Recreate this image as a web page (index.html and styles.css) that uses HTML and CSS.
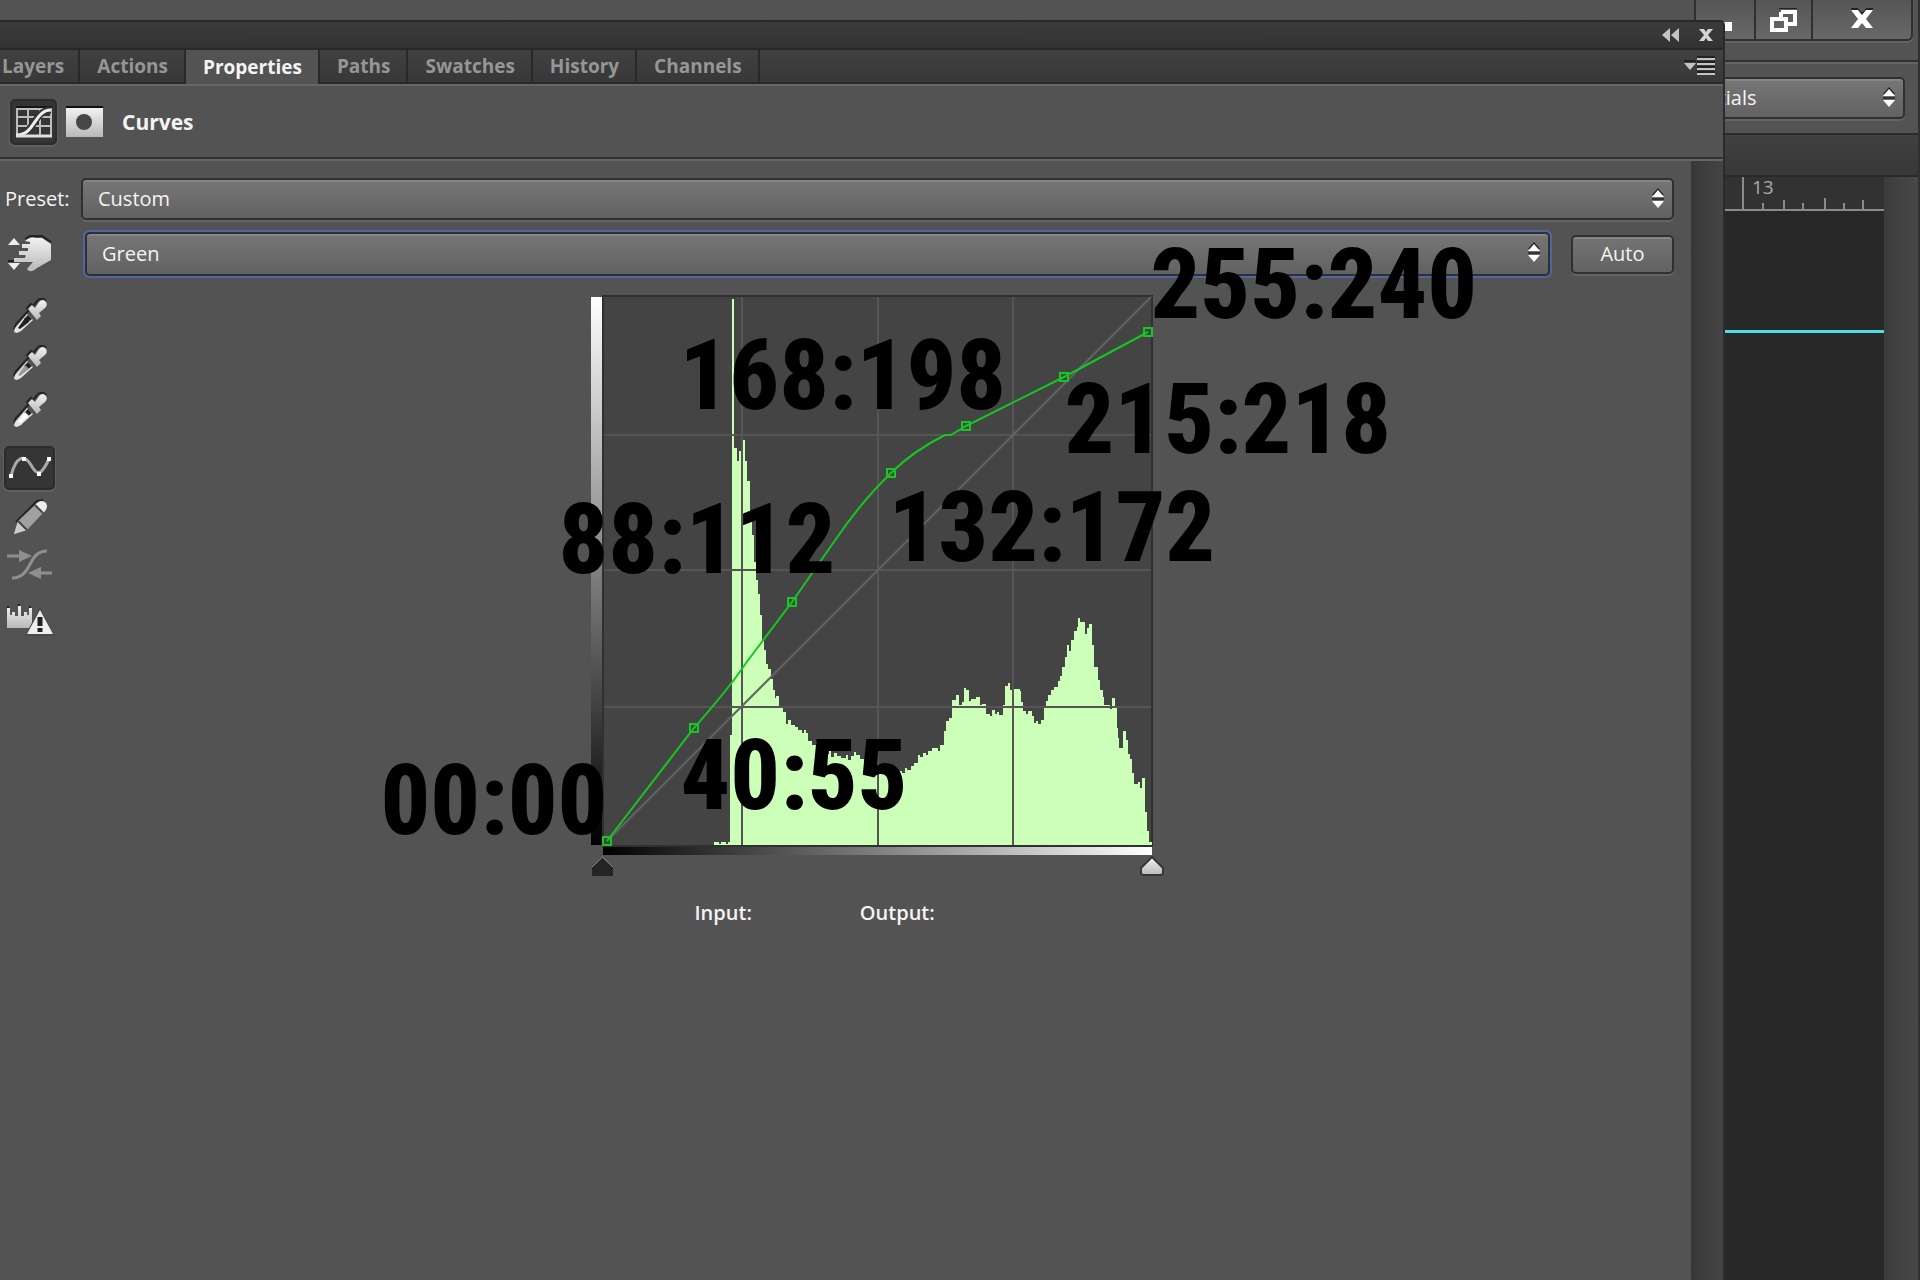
FILE: index.html
```
<!DOCTYPE html>
<html lang="en">
<head>
  <meta charset="UTF-8">
  <meta name="viewport" content="width=device-width, initial-scale=1.0">
  <title>Curves</title>
  <link rel="stylesheet" href="styles.css">
</head>
<body>
  <svg class="defs" aria-hidden="true">
    <defs>
      <linearGradient id="metal" x1="0" y1="0" x2="0" y2="1">
        <stop offset="0" stop-color="#f2f2f2"/>
        <stop offset="1" stop-color="#b8b8b8"/>
      </linearGradient>
      <symbol id="updown" viewBox="0 0 12 22">
        <path d="M0 7L6 0L12 7Z" fill="#222"/>
        <path d="M0 9L6 2L12 9Z" fill="#fff"/>
        <path d="M0 10H12V12H0Z" fill="#333"/>
        <path d="M0 13H12L6 20Z" fill="#fff"/>
      </symbol>
      <symbol id="dropper" viewBox="0 0 36 36">
        <path d="M1 31L3 26L16 12L14 10L18 6L20 8L25 2Q30 -1 33 3" fill="none" stroke="#252525" stroke-width="2"/>
        <path d="M14 16L20 22L8 33L4 35L1 34L2 30Z" fill="#e4e4e4"/>
        <path d="M15 17L19 21L14 25L11 21Z" fill="#222"/>
        <path class="ink" d="M12 20L16 24L7 31L5 30Z"/>
        <path d="M15 11L19 7L22 10L26 4Q30 0 33 4Q35 7 32 10L26 15L28 18L24 22Z" fill="url(#metal)"/>
      </symbol>
    </defs>
  </svg>

  <div class="app">
    <div class="titlebar">
      <button class="win min" aria-label="Minimize"><svg width="14" height="10"><path d="M0 1H14V10H0Z" fill="#fff"/></svg></button>
      <button class="win restore" aria-label="Restore">
        <svg width="28" height="26"><path d="M9 0H27" stroke="#222" stroke-width="2"/><path d="M11 4H25V16H18M11 4V10" fill="none" stroke="#fff" stroke-width="4"/><path d="M2 11H16V22H2Z" fill="none" stroke="#fff" stroke-width="4"/></svg>
      </button>
      <button class="win close" aria-label="Close">
        <svg width="24" height="22"><path d="M1 1L7 1L12 6L17 1H23" fill="none" stroke="#222" stroke-width="2"/><path d="M1 2H8L12 7L16 2H23L16 11L23 20H16L12 15L8 20H1L8 11Z" fill="#fff"/></svg>
      </button>
    </div>
    <div class="options">
      <div class="select workspace">
        <select aria-label="Workspace"><option>Essentials</option></select>
        <svg class="arrows"><use href="#updown"/></svg>
      </div>
    </div>
    <div class="doc-tabs"></div>
    <div class="document">
      <div class="canvas">
        <div class="ruler">
          <svg width="160" height="34"><path d="M19 0V33" stroke="#8a8a8a" stroke-width="2"/><path d="M39 26V33M60 23V33M79 26V33M101 21V33M120 26V33M139 23V33" stroke="#8a8a8a" stroke-width="2"/></svg>
          <span>13</span>
        </div>
        <div class="guide"></div>
      </div>
      <div class="doc-scroll"></div>
    </div>
  </div>

  <div class="panel">
    <div class="panel-bar">
      <button aria-label="Collapse panel"><svg width="17" height="14"><path d="M0 7L8 0V14ZM9 7L17 0V14Z" fill="#c4c4c4"/></svg></button>
      <button aria-label="Close panel"><svg width="14" height="14"><path d="M0 1H5L7 4L9 1H14L9 7L14 13H9L7 10L5 13H0L5 7Z" fill="#d4d4d4"/></svg></button>
    </div>
    <div class="tabs">
      <button>Layers</button>
      <button>Actions</button>
      <button class="active">Properties</button>
      <button>Paths</button>
      <button>Swatches</button>
      <button>History</button>
      <button>Channels</button>
      <button class="menu" aria-label="Panel menu">
        <svg width="31" height="20"><path d="M0 5H12" stroke="#222" stroke-width="2"/><path d="M0 7H12L6 14Z" fill="#c4c4c4"/><path d="M13 1H31M13 6H31M13 11H31M13 16H31" stroke="#222" stroke-width="2"/><path d="M13 3H31M13 8H31M13 13H31M13 18H31" stroke="#c4c4c4" stroke-width="2"/></svg>
      </button>
    </div>

    <div class="heading">
      <button class="icon pressed" aria-label="Curves adjustment">
        <svg width="36" height="32">
          <path d="M0 1H36" stroke="#151515" stroke-width="2"/>
          <path d="M1 3H35V30H1ZM1 11H35M1 20H35M12 3V30M24 3V30" fill="none" stroke="#bdbdbd" stroke-width="2"/>
          <path d="M2 29C18 29 18 4 35 4" fill="none" stroke="#333" stroke-width="7"/>
          <path d="M0 29C19 30 18 4 35 4" fill="none" stroke="#efefef" stroke-width="3"/>
          <path d="M0 30H36" stroke="#e0e0e0" stroke-width="3"/>
        </svg>
      </button>
      <button class="icon" aria-label="Mask">
        <svg width="37" height="32"><path d="M0 1H37" stroke="#111" stroke-width="2"/><path d="M0 2H37V31H0Z" fill="url(#metal)"/><circle cx="18" cy="16" r="8" fill="#474747"/></svg>
      </button>
      <h1>Curves</h1>
    </div>

    <div class="panel-main">
      <div class="body">
        <div class="row">
          <label for="preset">Preset:</label>
          <div class="select">
            <select id="preset"><option>Custom</option></select>
            <svg class="arrows"><use href="#updown"/></svg>
          </div>
        </div>
        <div class="row">
          <button class="tool" aria-label="Adjust on image">
            <svg width="44" height="38">
              <path d="M0 10L6 3L12 10Z" fill="#eee"/><path d="M0 28H12L6 35Z" fill="#eee"/>
              <path d="M0 26H12M17 4L22 1L34 1L43 7" fill="none" stroke="#222" stroke-width="2"/>
              <path d="M17 6Q22 1 28 3L34 3L43 9V25L29 33Q22 39 19 34L25 27H6V23H17V20H11V16H20V13H14V9H22V7Z" fill="url(#metal)"/>
              <path d="M14 14H20M11 21H18" stroke="#555" stroke-width="1"/>
            </svg>
          </button>
          <div class="select focused">
            <select aria-label="Channel"><option>Green</option></select>
            <svg class="arrows"><use href="#updown"/></svg>
          </div>
          <button class="auto">Auto</button>
        </div>

        <div class="work">
          <div class="tools">
            <button class="tool dropper black" aria-label="Sample black point"><svg width="36" height="36"><use href="#dropper"/></svg></button>
            <button class="tool dropper gray" aria-label="Sample gray point"><svg width="36" height="36"><use href="#dropper"/></svg></button>
            <button class="tool dropper white" aria-label="Sample white point"><svg width="36" height="36"><use href="#dropper"/></svg></button>
            <button class="tool pressed" aria-label="Edit points">
              <svg width="46" height="28"><path d="M4 22C9 2 17 0 24 11C30 22 34 22 42 5" fill="none" stroke="#aaa" stroke-width="3"/><path d="M2 20H6V24H2ZM15 3H19V7H15ZM30 18H34V22H30ZM40 3H44V7H40Z" fill="#fff"/></svg>
            </button>
            <button class="tool pencil" aria-label="Draw curve">
              <svg width="36" height="36"><path d="M3 23L24 2L30 1" fill="none" stroke="#252525" stroke-width="2"/><path d="M5 22L22 6L30 14L14 31L1 35Z" fill="#a0a0a0"/><path d="M5 22L14 31L1 35Z" fill="#ccc"/><path d="M22 6Q28 -1 33 4Q36 9 30 14Z" fill="#eee"/><path d="M5 22L14 31M22 6L30 14" stroke="#444" stroke-width="2"/></svg>
            </button>
            <button class="tool" aria-label="Smooth curve">
              <svg width="46" height="34"><path d="M0 9H14M45 26H30" stroke="#8f8f8f" stroke-width="3"/><path d="M12 3L25 9L12 15ZM34 20L21 26L34 32Z" fill="#8f8f8f"/><path d="M5 31C26 31 20 4 40 4" fill="none" stroke="#8f8f8f" stroke-width="3"/></svg>
            </button>
            <button class="tool warning" aria-label="Calculate histogram">
              <svg width="48" height="32"><path d="M1 4V2M12 3V0M23 4V2" stroke="#222" stroke-width="2"/><path d="M0 24V4H3V11H5V8H8V12H11V2H14V12H17V8H20V11H22V4H25V24Z" fill="url(#metal)"/><path d="M33 3L18 32H48Z" fill="#494949"/><path d="M33 6L46 30H20Z" fill="#ededed"/><path d="M33 13V22M33 24V28" stroke="#222" stroke-width="5"/></svg>
            </button>
          </div>

          <div class="graph">
            <div class="plot">
              <svg width="590" height="590" viewBox="582 290 590 590" role="img" aria-label="Green channel curve and histogram">
                <defs>
                  <linearGradient id="outRamp" x1="0" y1="0" x2="0" y2="1"><stop offset="0" stop-color="#fff"/><stop offset="1" stop-color="#000"/></linearGradient>
                  <linearGradient id="inRamp"><stop offset="0" stop-color="#000"/><stop offset="1" stop-color="#fff"/></linearGradient>
                </defs>
                <path d="M590 297H601V845H590Z" fill="url(#outRamp)"/>
                <path d="M602 296H1151V846H602Z" fill="#444" stroke="#303030" stroke-width="2"/>
                <path d="M602 847H1151V855H602Z" fill="url(#inRamp)"/>
                <!-- histogram -->
                <path class="histogram" d="M713 844V842H718V844H720V842H725V844H727V842H729V735H731V299H733V448H736V461H738V451H741V440H744V461H746V481H749V513H751V535H753V562H755V580H757V594H759V615H761V640H763V650H765V664H767V669H770V679H772V690H774V698H775V696H778V707H782V712H785V724H787V720H790V725H794V727H797V730H801V733H803V730H805V733H807V741H811V745H815V742H817V750H821V751H823V748H825V754H828V751H830V757H833V753H836V756H840V758H845V755H847V760H850V756H853V752H855V755H859V759H863V763H868V760H871V766H875V770H881V767H885V772H889V769H893V773H899V771H901V773H904V768H906V770H910V766H913V763H917V755H919V757H922V753H925V755H927V751H931V748H937V751H939V745H943V731H945V721H948V718H951V700H955V695H958V705H961V702H963V688H965V690H968V701H970V699H975V697H979V705H981V704H985V714H989V716H991V710H994V714H996V712H998V715H1002V705H1004V686H1007V683H1009V690H1013V689H1019V691H1020V702H1022V711H1025V714H1027V711H1031V716H1033V723H1035V721H1037V724H1040V720H1043V707H1045V701H1047V695H1050V690H1053V687H1057V681H1059V676H1061V667H1064V657H1066V645H1068V651H1070V640H1073V631H1076V627H1077V618H1079V622H1084V634H1086V628H1088V624H1091V645H1093V667H1097V680H1099V690H1102V697H1103V705H1109V709H1111V698H1114V707H1116V728H1117V738H1118V748H1122V731H1125V740H1127V754H1129V759H1131V773H1133V784H1137V782H1139V788H1141V778H1144V812H1146V831H1148V842H1151V845H713Z"/>
                <path class="grid" d="M741 297V845M877 297V845M1012 297V845M603 435H1150M603 570H1150M603 707H1150"/>
                <path class="diagonal" d="M606 841L1150 297"/>
                <path class="curve" d="M606 841L693 728C715 703 735 678 745 663L791 602L835 539Q861 501 890 473Q912 451 944 435H950L965 426L1063 377L1147 332"/>
                <path class="points" d="M602 837h8v8h-8ZM689 724h8v8h-8ZM787 598h8v8h-8ZM886 469h8v8h-8ZM961 422h8v8h-8ZM1059 373h8v8h-8ZM1143 328h8v8h-8Z"/>
                <path d="M591 866L601 857L612 866V876H591Z" fill="#252525"/>
                <path d="M591 867L601.500 857L612 867" fill="none" stroke="#999" stroke-width="1"/>
                <path d="M1151 857L1162 868V873Q1162 875 1159 875H1143Q1140 875 1140 873V868Z" fill="url(#metal)" stroke="#363636" stroke-width="2"/>
              </svg>
              <span class="note p0">00:00</span>
              <span class="note p1">40:55</span>
              <span class="note p2">88:112</span>
              <span class="note p3">132:172</span>
              <span class="note p4">168:198</span>
              <span class="note p5">215:218</span>
              <span class="note p6">255:240</span>
            </div>
            <div class="values">
              <span>Input:</span>
              <span>Output:</span>
            </div>
          </div>
        </div>
      </div>
      <div class="panel-scroll"></div>
    </div>
  </div>
</body>
</html>
```
FILE: styles.css
```
* {
  box-sizing: border-box;
}
body {
  margin: 0;
  min-height: 100vh;
  position: relative;
  overflow: hidden;
  background: #535353;
  color: #f4f4f4;
  font-family: "Open Sans", "Noto Sans", sans-serif;
  font-size: 20px;
  font-weight: 500;
}
button {
  font: inherit;
  color: inherit;
  background: none;
  border: none;
  padding: 0;
}
svg {
  display: block;
  flex: none;
}
.defs {
  position: absolute;
  width: 0;
  height: 0;
}

/* Application window behind the panel */
.app {
  min-height: 100vh;
  display: flex;
  flex-direction: column;
  border-right: 2px solid #303030;
}
.titlebar {
  height: 60px;
  display: flex;
  justify-content: flex-end;
  align-items: flex-start;
  padding-right: 5px;
}
.win {
  height: 41px;
  display: flex;
  justify-content: center;
  padding-top: 8px;
  background: linear-gradient(#555, #686868);
  border: 2px solid #303030;
  border-top: none;
  border-right: none;
  box-shadow: 0 2px #646464;
}
.min {
  width: 60px;
  padding-top: 21px;
}
.restore {
  width: 57px;
}
.close {
  width: 102px;
  border-right: 2px solid #303030;
  border-radius: 0 0 6px 0;
}
.options {
  height: 73px;
  display: flex;
  justify-content: flex-end;
  align-items: flex-start;
  padding: 15px 13px 0 0;
  border-top: 2px solid #303030;
  box-shadow: inset 0 2px #646464;
}
.doc-tabs {
  height: 44px;
  background: linear-gradient(#414141, #373737);
  border-top: 2px solid #2b2b2b;
  border-bottom: 2px solid #292929;
}
.document {
  flex: 1;
  display: flex;
  justify-content: flex-end;
}
.canvas {
  width: 160px;
  background: #282828;
}
.ruler {
  position: relative;
  height: 34px;
  background: #323232;
  border-bottom: 2px solid #8a8a8a;
}
.ruler span {
  position: absolute;
  left: 28px;
  top: 0;
  font-size: 19px;
  line-height: 20px;
  color: #aaa;
}
.guide {
  height: 3px;
  margin-top: 119px;
  background: #4fdde8;
}
.doc-scroll {
  width: 34px;
  background: linear-gradient(90deg, #3c3c3c, #484848);
}

/* Drop-downs */
.select {
  position: relative;
  flex: 1;
}
.select select {
  display: block;
  appearance: none;
  width: 100%;
  height: 42px;
  padding: 0 40px 2px 15px;
  font: inherit;
  color: inherit;
  background: linear-gradient(#767676, #626262);
  border: 2px solid #303030;
  border-radius: 5px;
  outline: none;
  box-shadow: inset 0 2px #858585, 0 2px #646464;
}
.arrows {
  position: absolute;
  right: 10px;
  top: 10px;
  width: 12px;
  height: 22px;
  pointer-events: none;
}
.workspace {
  flex: none;
  width: 257px;
}

/* Floating panel */
.panel {
  position: absolute;
  left: 0;
  right: 195px;
  top: 20px;
  bottom: 0;
  display: flex;
  flex-direction: column;
  background: #535353;
  border-top: 2px solid #282828;
  border-right: 2px solid #2b2b2b;
  border-radius: 0 5px 0 0;
}
.panel-bar {
  height: 26px;
  display: flex;
  justify-content: flex-end;
  align-items: center;
  gap: 20px;
  padding-right: 10px;
  background: linear-gradient(#3b3b3b, #333);
}
.tabs {
  height: 36px;
  display: flex;
  padding-bottom: 2px;
  background: linear-gradient(#414141, #373737);
  border-top: 2px solid #282828;
  box-shadow: inset 0 -2px #292929;
}
.tabs button {
  padding: 0 16px 0 17px;
  border-right: 2px solid #292929;
  color: #969696;
  font-weight: 700;
  font-size: 19px;
  line-height: 32px;
}
.tabs button:first-child {
  padding: 0 14px 0 2px;
}
.tabs .active {
  background: #535353;
  color: #f4f4f4;
  margin-bottom: -2px;
}
.tabs .menu {
  margin-left: auto;
  padding: 0 8px 0 0;
  border: none;
}
.heading {
  height: 75px;
  display: flex;
  align-items: center;
  gap: 9px;
  padding-left: 10px;
  border-top: 2px solid #666;
  border-bottom: 2px solid #333;
}
.icon {
  height: 46px;
}
.pressed {
  display: flex;
  align-items: center;
  justify-content: center;
  background: #353535;
  border: 2px solid #2c2c2c;
  border-radius: 5px;
  box-shadow: 0 1px 1px 1px #606060;
}
.icon.pressed {
  width: 47px;
}
h1 {
  margin: 0 0 0 10px;
  font-size: 21px;
  font-weight: 700;
}
.panel-main {
  flex: 1;
  display: flex;
  border-top: 2px solid #666;
}
.body {
  flex: 1;
  padding: 17px 17px 0 0;
}
.panel-scroll {
  width: 32px;
  background: linear-gradient(90deg, #383838, #444);
}
.row {
  display: flex;
  align-items: center;
  height: 42px;
  margin-bottom: 13px;
}
.row label {
  width: 81px;
  padding: 0 0 2px 5px;
}
.row .tool {
  width: 83px;
  padding-left: 8px;
}
.focused {
  border: 2px solid #4e66a6;
  border-radius: 6px;
  margin: -1px 0;
}
.focused select {
  height: 44px;
  box-shadow: inset 0 2px #858585;
}
.auto {
  width: 103px;
  height: 39px;
  padding-bottom: 2px;
  margin-left: 19px;
  background: linear-gradient(#747474, #626262);
  border: 2px solid #303030;
  border-radius: 5px;
  box-shadow: inset 0 2px #858585, 0 2px #646464;
}

/* Curve tools */
.work {
  display: flex;
}
.tools {
  width: 81px;
  padding: 4px 0 0 4px;
}
.tools .tool {
  display: flex;
  align-items: center;
  width: 51px;
  height: 47px;
  padding-left: 3px;
}
.tools .dropper,
.tools .pencil {
  padding-left: 9px;
}
.tools .pressed {
  height: 44px;
  margin: 13px 0 3px;
  padding: 0;
}
.tools .warning {
  margin-top: 9px;
}
.black {
  fill: #222;
}
.gray {
  fill: #999;
}
.white {
  fill: #fff;
}

/* Graph */
.graph {
  flex: 1;
  display: flex;
  flex-direction: column;
  align-items: center;
}
.plot {
  position: relative;
  width: 590px;
  height: 590px;
  margin-top: 2px;
}
.histogram {
  fill: #ccffb8;
  shape-rendering: crispEdges;
}
.grid,
.diagonal {
  fill: none;
  stroke: #555;
  stroke-width: 2;
}
.diagonal {
  stroke: #636363;
}
.curve,
.points {
  fill: none;
  stroke: #16c622;
  stroke-width: 2;
}
.note {
  position: absolute;
  color: #000;
  font-family: "Roboto Condensed", "Liberation Sans Narrow", sans-serif;
  font-size: 98px;
  font-weight: 800;
  line-height: 100px;
  white-space: nowrap;
}
.p0 { left: -202px; top: 461px; }
.p1 { left: 98px; top: 436px; }
.p2 { left: -24px; top: 200px; }
.p3 { left: 306px; top: 188px; }
.p4 { left: 97px; top: 36px; }
.p5 { left: 482px; top: 80px; }
.p6 { left: 568px; top: -55px; }
.values {
  display: flex;
  gap: 108px;
  width: 366px;
  margin-top: 19px;
  font-weight: 600;
}
```
